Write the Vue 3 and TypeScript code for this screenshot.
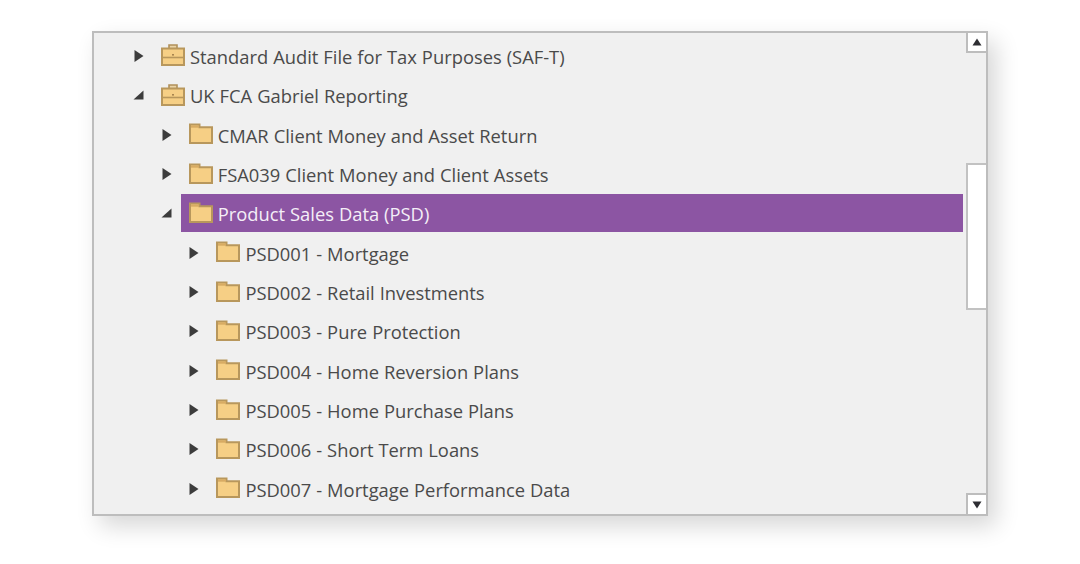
<script setup lang="ts">
interface Row {
  label: string
  depth: number
  open?: boolean
  kind?: 'case' | 'folder'
  selected?: boolean
}
const rows: Row[] = [
  { label: 'Standard Audit File for Tax Purposes (SAF-T)', depth: 0, kind: 'case' },
  { label: 'UK FCA Gabriel Reporting', depth: 0, open: true, kind: 'case' },
  { label: 'CMAR Client Money and Asset Return', depth: 1 },
  { label: 'FSA039 Client Money and Client Assets', depth: 1 },
  { label: 'Product Sales Data (PSD)', depth: 1, open: true, selected: true },
  { label: 'PSD001 - Mortgage', depth: 2 },
  { label: 'PSD002 - Retail Investments', depth: 2 },
  { label: 'PSD003 - Pure Protection', depth: 2 },
  { label: 'PSD004 - Home Reversion Plans', depth: 2 },
  { label: 'PSD005 - Home Purchase Plans', depth: 2 },
  { label: 'PSD006 - Short Term Loans', depth: 2 },
  { label: 'PSD007 - Mortgage Performance Data', depth: 2 },
]
</script>

<template>
  <div class="page">
    <div class="panel">
      <ul class="tree">
        <li v-for="r in rows" :key="r.label" class="row" :class="'depth-' + r.depth">
          <svg class="arrow" width="14" height="14" viewBox="0 0 14 14">
            <path v-if="r.open" d="M11.5 2.5V11.5H1.5Z" fill="#3c3c3c" />
            <path v-else d="M2.5 1L11.5 7L2.5 13Z" fill="#3c3c3c" />
          </svg>
          <div class="item" :class="{ selected: r.selected }">
            <svg v-if="r.kind === 'case'" class="icon" width="24" height="22" viewBox="0 0 24 22">
              <path d="M8 4.5V1H16V4.5" fill="#e9d3a6" stroke="#b0905a" stroke-width="1.6" />
              <rect x="1" y="4.5" width="22" height="16.5" fill="#f6cf85" stroke="#b8975c" stroke-width="2" />
              <path d="M1 13.5H23" stroke="#b8975c" stroke-width="1.6" />
              <rect x="11" y="10" width="2" height="1.6" fill="#a88550" />
            </svg>
            <svg v-else class="icon" width="24" height="22" viewBox="0 0 24 22">
              <path d="M1 20V1.5H10.5V4.2H23V20Z" fill="#f6cf85" stroke="#b8975c" stroke-width="2" />
              <rect x="2" y="2.5" width="8" height="2.2" fill="#d8ab63" />
            </svg>
            <span class="label">{{ r.label }}</span>
          </div>
        </li>
      </ul>
      <div class="scrollbar">
        <button class="sb-btn" type="button" aria-label="Scroll up">
          <svg width="10" height="8" viewBox="0 0 10 8"><path d="M5 0.5L9.5 7.5H0.5Z" fill="#2e2e33" /></svg>
        </button>
        <div class="track"><div class="thumb"></div></div>
        <button class="sb-btn" type="button" aria-label="Scroll down">
          <svg width="10" height="8" viewBox="0 0 10 8"><path d="M5 7.5L9.5 0.5H0.5Z" fill="#2e2e33" /></svg>
        </button>
      </div>
    </div>
  </div>
</template>

<style>
html, body { margin: 0; background: #fff; }
</style>

<style scoped>
.page {
  width: 1080px;
  height: 564px;
  padding: 31px 92px 0;
  box-sizing: border-box;
  overflow: hidden;
  background: #fff;
  font-family: "Open Sans", "Noto Sans", sans-serif;
}
.panel {
  display: flex;
  width: 896px;
  height: 485px;
  box-sizing: border-box;
  border: 2px solid #bdbdbd;
  background: #f0f0f0;
  box-shadow: 8px 10px 22px rgba(0, 0, 0, 0.16);
}
.tree {
  flex: 1;
  margin: 0;
  padding: 4.3px 3px 0 0;
  list-style: none;
  display: flex;
  flex-direction: column;
  overflow: hidden;
}
.row {
  flex: 0 0 39.35px;
  display: flex;
  align-items: center;
  box-sizing: border-box;
}
.depth-0 { padding-left: 38px; }
.depth-1 { padding-left: 65.7px; }
.depth-2 { padding-left: 93.4px; }
.arrow { flex: 0 0 14px; margin-top: -2px; }
.item {
  flex: 1;
  height: 38px;
  margin: -1px 0 1px 7px;
  padding-left: 8px;
  display: flex;
  align-items: center;
  color: #4a4a4a;
  box-sizing: border-box;
}
.item.selected {
  background: #8c55a3;
  color: #f4eef7;
}
.icon { flex: 0 0 24px; margin-top: -1px; }
.label {
  margin: 1px 0 0 5px;
  font-size: 18.35px;
  word-spacing: 0.2px;
  white-space: nowrap;
}
.scrollbar {
  flex: 0 0 20px;
  display: flex;
  flex-direction: column;
}
.sb-btn {
  flex: 0 0 20px;
  padding: 0;
  border: 0;
  background: #fff;
  display: flex;
  align-items: center;
  justify-content: center;
  box-sizing: border-box;
}
.sb-btn:first-child { border-left: 2px solid #bdbdbd; border-bottom: 2px solid #bdbdbd; }
.sb-btn:last-child { flex-basis: 21px; border-left: 2px solid #bdbdbd; border-top: 2px solid #bdbdbd; }
.track { flex: 1; padding-top: 110px; }
.thumb {
  height: 147px;
  box-sizing: border-box;
  background: #fff;
  border: 2px solid #c2c2c2;
  border-right: 0;
}
</style>
